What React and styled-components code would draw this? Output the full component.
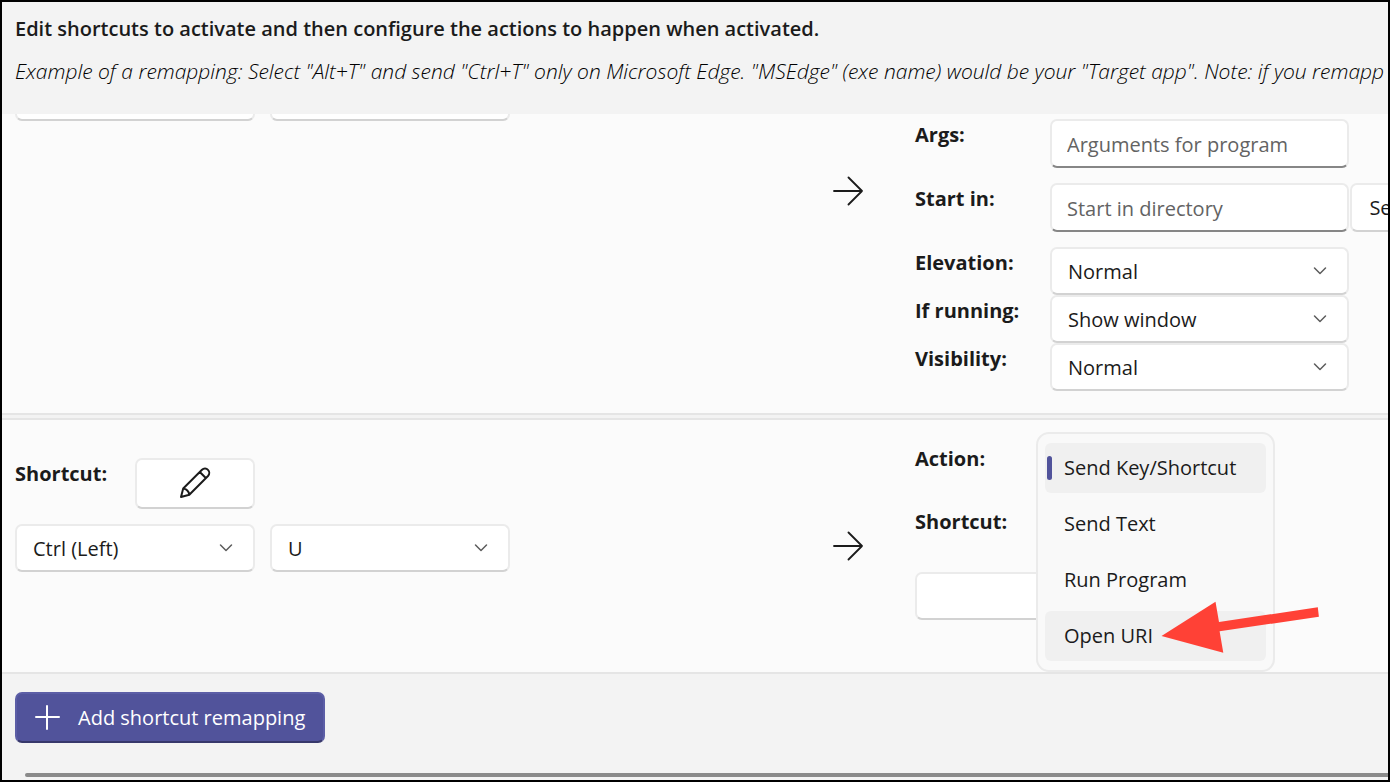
import React from "react";
import styled, { createGlobalStyle, css } from "styled-components";

const GlobalStyle = createGlobalStyle`
  *, *::before, *::after { box-sizing: border-box; }
  body {
    margin: 0;
    overflow: hidden;
    color: #1b1b1b;
    font-family: "Open Sans", "Noto Sans", sans-serif;
    font-size: 20px;
    line-height: 30px;
  }
  button, input, select { font: inherit; color: inherit; }
`;

const Window = styled.main`
  display: flex;
  flex-direction: column;
  height: 100vh;
  overflow: hidden;
  border: 2px solid #000;
  background: #f3f3f3;
`;

const Header = styled.header`
  flex: none;
  padding: 12px 0 28px 13px;
  white-space: nowrap;
  overflow: hidden;
`;

const Title = styled.h1`
  margin: 0 0 12px;
  font-size: 20px;
  line-height: 30px;
  font-weight: 600;
`;

const Example = styled.p`
  margin: 0;
  color: #000;
  font-size: 21px;
  font-weight: 300;
  font-style: italic;
`;

const List = styled.section`
  flex: 1;
  min-height: 0;
  display: flex;
  flex-direction: column;
  justify-content: flex-end;
  gap: 3px;
  overflow: hidden;
`;

const Row = styled.article`
  flex: none;
  display: grid;
  grid-template-columns: 818px 82px 1fr;
  min-height: ${(p) => (p.$tall ? 448 : 256)}px;
  padding-left: 13px;
  border: solid #e5e5e5;
  border-width: 2px 0;
  background: #fbfbfb;
  white-space: nowrap;
`;

const Keys = styled.div`
  display: flex;
  flex-direction: column;
  gap: 15px;
  padding-top: 38px;
`;

const Line = styled.div`
  display: flex;
  gap: ${(p) => p.$gap || 0}px;
  min-height: ${(p) => p.$min || 0}px;
`;

const ArrowCell = styled.div`
  display: flex;
  align-items: center;
`;

const Details = styled.div`
  display: flex;
  flex-direction: column;
  ${(p) =>
    p.$end
      ? css`
          justify-content: flex-end;
          padding-bottom: 22px;
        `
      : css`
          gap: 15px;
          padding-top: 23px;
        `}
`;

const Field = styled.div`
  position: relative;
  display: flex;
  align-items: flex-start;
  margin-bottom: ${(p) => (p.$spaced ? 15 : 0)}px;
`;

const Label = styled.label`
  flex: none;
  width: ${(p) => p.$width}px;
  padding-top: 1px;
  font-weight: 700;
`;

const controlBox = css`
  height: ${(p) => p.$height || 48}px;
  border: 2px solid #ebebeb;
  border-bottom-color: #d2d2d2;
  border-radius: 7px;
  background: #fff;
`;

const TextBox = styled.input`
  ${controlBox}
  height: 49px;
  width: 299px;
  margin-right: 1px;
  padding: 2px 15px 0;
  border-bottom-color: #868686;
  &::placeholder { color: #636363; opacity: 1; }
`;

const Button = styled.button`
  ${controlBox}
  flex: none;
  display: inline-flex;
  align-items: center;
  justify-content: center;
  width: ${(p) => p.$width}px;
  padding: 0;
`;

const SelectBox = styled.div`
  position: relative;
  flex: none;
  width: ${(p) => p.$width}px;
  svg {
    position: absolute;
    right: 22px;
    top: 19px;
    pointer-events: none;
  }
`;

const NativeSelect = styled.select`
  ${controlBox}
  display: block;
  width: 100%;
  padding: 2px 44px 0 16px;
  appearance: none;
`;

const Menu = styled.div`
  position: absolute;
  z-index: 1;
  top: -11px;
  left: 121px;
  display: flex;
  flex-direction: column;
  gap: 6px;
  width: 239px;
  padding: 9px 7px;
  border: 2px solid #ebebeb;
  border-radius: 13px;
  background: #f9f9f9;
`;

const MenuItem = styled.button`
  display: flex;
  align-items: center;
  gap: 12px;
  height: 50px;
  padding: 0 2px;
  border: 0;
  border-radius: 6px;
  background: ${(p) => (p.$filled ? "#f0f0f0" : "transparent")};
  text-align: left;
  &::before {
    content: "";
    width: 5px;
    height: 24px;
    border-radius: 3px;
    background: ${(p) => (p.$current ? "#51539b" : "transparent")};
  }
`;

const Pointer = styled.svg`
  position: absolute;
  z-index: 2;
  top: 158px;
  left: 245px;
  pointer-events: none;
`;

const Footer = styled.footer`
  flex: none;
  display: flex;
  flex-direction: column;
  align-items: flex-start;
  padding: 18px 0 3px 13px;
`;

const AddButton = styled.button`
  display: inline-flex;
  align-items: center;
  gap: 18px;
  width: 310px;
  height: 51px;
  padding: 0 17px;
  border: 2px solid #5c5ea6;
  border-bottom-color: #37386b;
  border-radius: 7px;
  background: #51539b;
  color: #fff;
  white-space: nowrap;
`;

const ScrollThumb = styled.div`
  align-self: stretch;
  height: 4px;
  margin: 30px 0 0 10px;
  border-radius: 2px 0 0 2px;
  background: #8a8a8a;
`;

const Chevron = () => (
  <svg width="14" height="10" viewBox="0 0 14 10" fill="none" stroke="#5c5c5c" strokeWidth="1.5" strokeLinecap="round" strokeLinejoin="round" aria-hidden="true">
    <path d="M1.5 2 7 7.5 12.5 2" />
  </svg>
);

const Select = ({ width, options, ...rest }) => (
  <SelectBox $width={width}>
    <NativeSelect {...rest}>
      {options.map((o) => (
        <option key={o}>{o}</option>
      ))}
    </NativeSelect>
    <Chevron />
  </SelectBox>
);

const ArrowIcon = () => (
  <svg width="30" height="30" viewBox="0 0 30 30" fill="none" stroke="#1b1b1b" strokeWidth="1.8" strokeLinecap="round" strokeLinejoin="round" aria-hidden="true">
    <path d="M1 15H29M15.500 1.500 29 15 15.500 28.500" />
  </svg>
);

const PencilIcon = () => (
  <svg width="32" height="34" viewBox="0 0 32 34" fill="none" stroke="#1b1b1b" strokeWidth="2" strokeLinejoin="round" strokeLinecap="round" aria-hidden="true">
    <path d="M2 30 4.200 21.500 23 2.800C24.800 1 27.400 1.200 29 2.900 30.600 4.500 30.700 7.200 29 9L10.300 27.700ZM20.800 5 26.800 11M4.200 21.500C7.500 22 9.700 24.200 10.300 27.700" />
  </svg>
);

const PlusIcon = () => (
  <svg width="26" height="26" viewBox="0 0 26 26" fill="none" stroke="#fff" strokeWidth="2" strokeLinecap="round" aria-hidden="true">
    <path d="M2 12H25M13 1V24" />
  </svg>
);

const actions = ["Send Key/Shortcut", "Send Text", "Run Program", "Open URI"];

export default function App() {
  return (
    <>
      <GlobalStyle />
      <Window>
        <Header>
          <Title>Edit shortcuts to activate and then configure the actions to happen when activated.</Title>
          <Example>
            Example of a remapping: Select "Alt+T" and send "Ctrl+T" only on Microsoft Edge. "MSEdge" (exe name) would be
            your "Target app". Note: if you remapp
          </Example>
        </Header>

        <List>
          <Row $tall>
            <Keys>
              <Line $min={51} />
              <Line $gap={15}>
                <Select width={240} options={[]} aria-label="First key" />
                <Select width={240} options={[]} aria-label="Second key" />
              </Line>
            </Keys>
            <ArrowCell>
              <ArrowIcon />
            </ArrowCell>
            <Details $end>
              <Field $spaced>
                <Label $width={135} htmlFor="args">Args:</Label>
                <TextBox id="args" placeholder="Arguments for program" />
              </Field>
              <Field $spaced>
                <Label $width={135} htmlFor="start">Start in:</Label>
                <TextBox id="start" placeholder="Start in directory" />
                <Button $width={94} $height={49}>Select</Button>
              </Field>
              <Field>
                <Label $width={135} htmlFor="elevation">Elevation:</Label>
                <Select id="elevation" width={299} options={["Normal"]} />
              </Field>
              <Field>
                <Label $width={135} htmlFor="running">If running:</Label>
                <Select id="running" width={299} options={["Show window"]} />
              </Field>
              <Field>
                <Label $width={135} htmlFor="visibility">Visibility:</Label>
                <Select id="visibility" width={299} options={["Normal"]} />
              </Field>
            </Details>
          </Row>

          <Row>
            <Keys>
              <Line>
                <Label as="span" $width={120}>Shortcut:</Label>
                <Button $width={120} $height={51} aria-label="Edit shortcut">
                  <PencilIcon />
                </Button>
              </Line>
              <Line $gap={15}>
                <Select width={240} options={["Ctrl (Left)"]} aria-label="First key" />
                <Select width={240} options={["U"]} aria-label="Second key" />
              </Line>
            </Keys>
            <ArrowCell>
              <ArrowIcon />
            </ArrowCell>
            <Details>
              <Field>
                <Label $width={121} htmlFor="action">Action:</Label>
                <Select id="action" width={239} options={actions} />
                <Menu role="listbox" aria-label="Action">
                  {actions.map((a, i) => (
                    <MenuItem key={a} role="option" aria-selected={i === 0} $current={i === 0} $filled={i === 0 || i === 3}>
                      {a}
                    </MenuItem>
                  ))}
                </Menu>
                <Pointer width="160" height="54" viewBox="0 0 160 54" fill="#ff4136" aria-hidden="true">
                  <path d="M1.500 35 55.500 0.700 59 21 157.800 6.300 158.900 15.700 59.600 30.300 63.300 51.700Z" />
                </Pointer>
              </Field>
              <Field>
                <Label as="span" $width={121}>Shortcut:</Label>
                <Button $width={120} $height={51} aria-label="Edit target shortcut" />
              </Field>
              <Field>
                <Button $width={239} aria-label="Target key" />
              </Field>
            </Details>
          </Row>
        </List>

        <Footer>
          <AddButton>
            <PlusIcon />
            Add shortcut remapping
          </AddButton>
          <ScrollThumb />
        </Footer>
      </Window>
    </>
  );
}
